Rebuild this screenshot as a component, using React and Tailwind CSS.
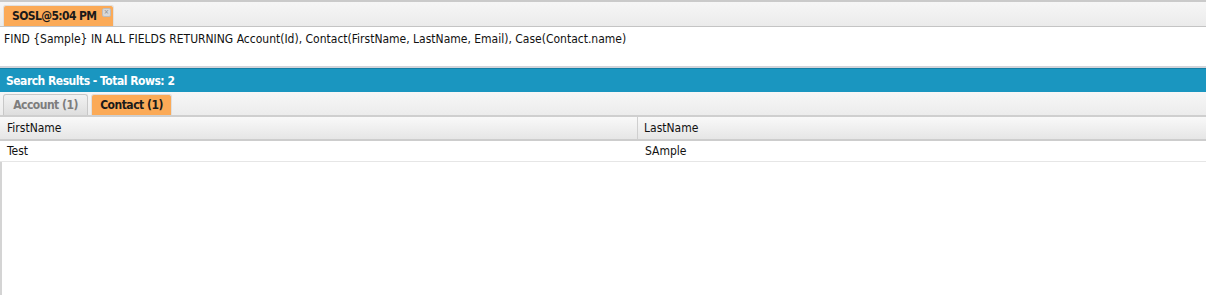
export default function App() {
  const font = { fontFamily: 'Tahoma, "DejaVu Sans Condensed", "DejaVu Sans", sans-serif' };

  return (
    <div className="w-[1206px] h-[295px] bg-white overflow-hidden text-[12px] text-[#111]" style={font}>
      {/* top tab bar */}
      <div className="border-t-2 border-[#cacaca] h-[27px] bg-gradient-to-b from-[#f6f6f6] to-[#ebebeb] border-b border-b-[#c4c4c4] flex items-end pl-[3px]">
        <div className="h-[21px] w-[111px] bg-[#fbaa57] border border-[#e0e0e0] border-b-0 rounded-t-[3px] flex items-center pl-[8px] relative">
          <span className="font-bold tracking-[-0.6px] text-[#1a1a1a]">SOSL@5:04 PM</span>
          <span className="absolute right-[2px] top-[2px] w-[9px] h-[9px] rounded-[2px] bg-[#d8d8d8] border border-[#bdbdbd] flex items-center justify-center text-[7px] leading-none text-[#888]">
            ×
          </span>
        </div>
      </div>

      {/* query editor */}
      <div className="h-[41px] border-b-2 border-[#d2d4da] pl-[4px] pt-[3px]">
        FIND {'{Sample}'} IN ALL FIELDS RETURNING Account(Id), Contact(FirstName, LastName, Email), Case(Contact.name)
      </div>

      {/* results header */}
      <div className="h-[24px] bg-[#1a96c0] border-t border-[#137fa5] flex items-center pl-[6px] text-white font-bold tracking-[-0.5px]">
        Search Results - Total Rows: 2
      </div>

      {/* result tabs */}
      <div className="h-[25px] bg-gradient-to-b from-[#f7f7f7] to-[#ececec] border-b-2 border-[#cfcfcf] flex items-end gap-[3px] pl-[3px]">
        <div className="h-[21px] w-[85px] bg-gradient-to-b from-[#f2f2f2] to-[#dedede] border border-[#c8c8c8] border-b-0 rounded-t-[3px] flex items-center justify-center font-bold tracking-[-0.5px] text-[#7d7d7d]">
          Account (1)
        </div>
        <div className="h-[21px] w-[81px] bg-[#fbaa57] border border-[#dedede] border-b-0 rounded-t-[3px] flex items-center justify-center font-bold tracking-[-0.5px] text-[#1a1a1a]">
          Contact (1)
        </div>
      </div>

      {/* grid */}
      <div className="border-l-2 border-[#d4d4d4] h-full">
        <div className="grid grid-cols-[638px_1fr] h-[24px] bg-gradient-to-b from-[#f9f9f9] to-[#e6e6e6] border-b-2 border-[#cdcdcd] -ml-[2px]">
          <div className="flex items-center pl-[7px] border-r border-[#cfcfcf]">FirstName</div>
          <div className="flex items-center pl-[6px]">LastName</div>
        </div>
        <div className="grid grid-cols-[638px_1fr] h-[21px] border-b border-[#e6e6e6] -ml-[2px] bg-white">
          <div className="flex items-center pl-[7px]">Test</div>
          <div className="flex items-center pl-[7px]">SAmple</div>
        </div>
      </div>
    </div>
  );
}
